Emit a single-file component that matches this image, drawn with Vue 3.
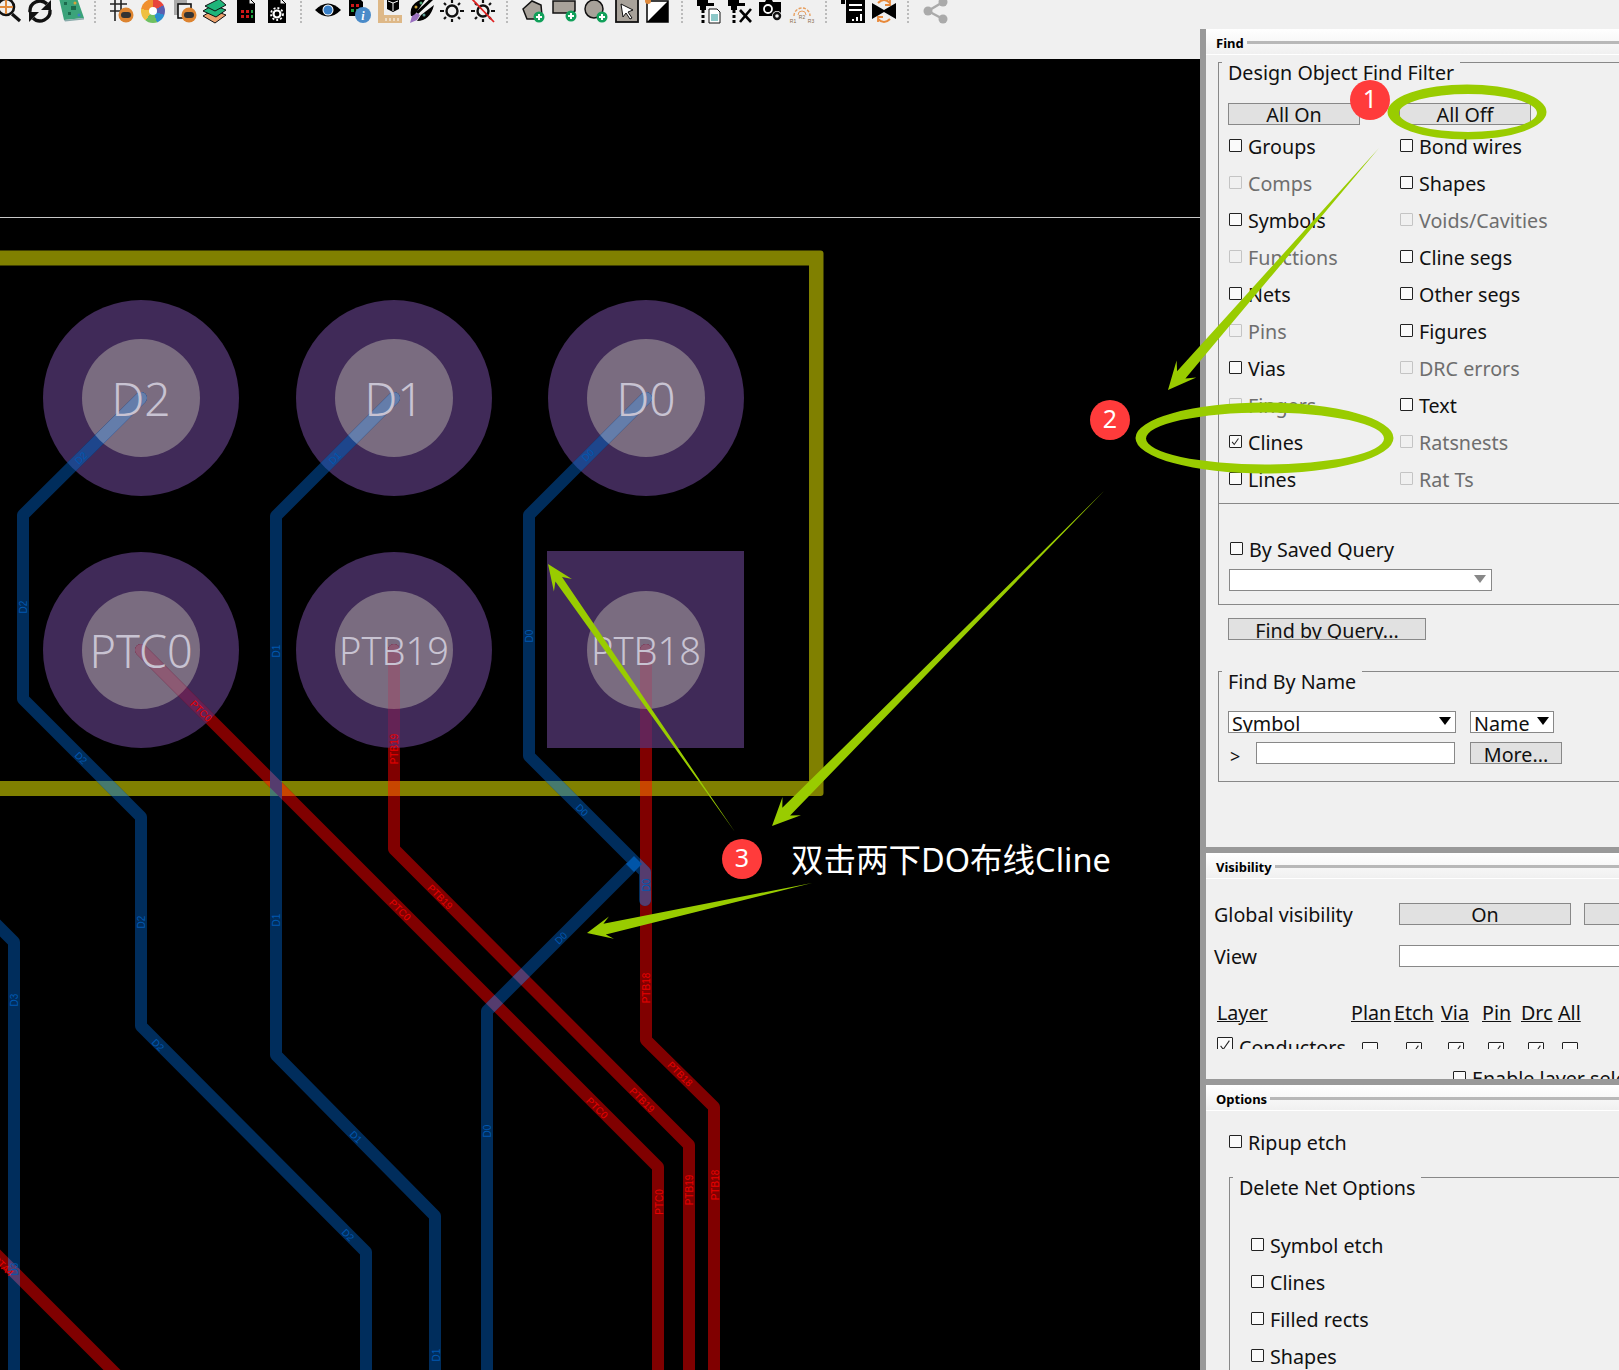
<script setup>
// pcb traces, in page coordinates
const blueTraces = [
  'M141 398 L23 515 V699 L141 817 V1026 L366 1252 V1380',
  'M394 398 L276 516 V1055 L435 1216 V1380',
  'M646 398 L529 515 V756 L645 872 V900',
  'M634 864 L487 1011 V1380',
  'M-20 908 L14 942 V1380'
]
const redTraces = [
  'M141 650 L658 1167 V1380',
  'M394 650 V849 L689 1145 V1380',
  'M646 650 V1040 L714 1107 V1380',
  'M-10 1248 L130 1388'
]
const pads = [
  { name: 'D2', x: 141, y: 398, size: 46 },
  { name: 'D1', x: 394, y: 398, size: 46 },
  { name: 'D0', x: 646, y: 398, size: 46 },
  { name: 'PTC0', x: 141, y: 650, size: 45 },
  { name: 'PTB19', x: 394, y: 650, size: 38 },
  { name: 'PTB18', x: 646, y: 650, size: 38, square: true }
]
const roundPads = pads.filter((p) => !p.square)

// overlap colours: traces are redrawn through a mask where they cross something
const overlaps = [
  { mask: 'url(#m-band)', blue: '#467a6e', red: '#c84600' },
  { mask: 'url(#m-outer)', blue: '#1e468c', red: '#642355' },
  { mask: 'url(#m-inner)', blue: '#647daa', red: '#8c5a73' }
]

const blueLabels = [
  ['D2', 81, 458, -45], ['D1', 335, 458, -45], ['D0', 588, 455, -45],
  ['D2', 23, 607, -90], ['D1', 276, 651, -90], ['D0', 529, 636, -90],
  ['D2', 81, 758, 45], ['D0', 582, 810, 45], ['D0', 646, 885, -90],
  ['D0', 561, 938, -45], ['D2', 141, 922, -90], ['D1', 276, 920, -90],
  ['D3', 14, 1000, -90], ['D2', 158, 1045, 45], ['D1', 356, 1137, 45],
  ['D0', 487, 1131, -90], ['D2', 348, 1235, 45], ['D1', 436, 1355, -90],
  ['D3', 14, 1269, -90]
]
const redLabels = [
  ['PTC0', 201, 711, 45], ['PTB19', 394, 749, -90], ['PTB19', 440, 897, 45],
  ['PTC0', 400, 910, 45], ['PTB18', 646, 988, -90], ['PTB18', 680, 1074, 45],
  ['PTB19', 642, 1100, 45], ['PTC0', 597, 1108, 45], ['PTC0', 659, 1202, -90],
  ['PTB19', 689, 1190, -90], ['PTB18', 715, 1185, -90], ['PTA4', 3, 1266, 45]
]

function arrow(x0, y0, x1, y1, shaft, headW, headL) {
  const len = Math.hypot(x1 - x0, y1 - y0)
  const ux = (x1 - x0) / len
  const uy = (y1 - y0) / len
  const nx = -uy
  const ny = ux
  const nk = headL * 0.72
  const pts = [
    [x0, y0],
    [x1 - ux * nk + nx * shaft / 2, y1 - uy * nk + ny * shaft / 2],
    [x1 - ux * headL + nx * headW / 2, y1 - uy * headL + ny * headW / 2],
    [x1, y1],
    [x1 - ux * headL - nx * headW / 2, y1 - uy * headL - ny * headW / 2],
    [x1 - ux * nk - nx * shaft / 2, y1 - uy * nk - ny * shaft / 2]
  ]
  return pts.map((p) => p.map((v) => v.toFixed(1)).join(',')).join(' ')
}
const arrows = [
  arrow(1379, 148, 1168, 390, 11, 26, 28),
  arrow(1104, 491, 772, 826, 11, 26, 28),
  arrow(735, 832, 548, 564, 8, 22, 26),
  arrow(812, 883, 587, 933, 11, 23, 25)
]

function ell(cx, cy, rx, ry) {
  return `M${cx - rx} ${cy}a${rx} ${ry} 0 1 0 ${rx * 2} 0a${rx} ${ry} 0 1 0 ${-rx * 2} 0Z`
}
const rings = [
  ell(1467, 112, 79.5, 27.5) + ell(1468, 113, 69, 19),
  ell(1264.5, 438, 129, 35.5) + ell(1265, 438.5, 119, 26)
]
const badges = [
  { n: 1, x: 1370, y: 100 },
  { n: 2, x: 1110, y: 420 },
  { n: 3, x: 742, y: 859 }
]

const filters = [
  { label: 'Groups' }, { label: 'Bond wires' },
  { label: 'Comps', off: true }, { label: 'Shapes' },
  { label: 'Symbols' }, { label: 'Voids/Cavities', off: true },
  { label: 'Functions', off: true }, { label: 'Cline segs' },
  { label: 'Nets' }, { label: 'Other segs' },
  { label: 'Pins', off: true }, { label: 'Figures' },
  { label: 'Vias' }, { label: 'DRC errors', off: true },
  { label: 'Fingers', off: true }, { label: 'Text' },
  { label: 'Clines', on: true }, { label: 'Ratsnests', off: true },
  { label: 'Lines' }, { label: 'Rat Ts', off: true }
]
const layerHeads = [
  { t: 'Layer', w: 134 }, { t: 'Plan', w: 43 }, { t: 'Etch', w: 47 },
  { t: 'Via', w: 41 }, { t: 'Pin', w: 39 }, { t: 'Drc', w: 37 }, { t: 'All', w: 30 }
]
const layerBoxes = [
  { w: 44, on: false }, { w: 42, on: true }, { w: 40, on: true },
  { w: 40, on: true }, { w: 34, on: true }, { w: 30, on: false }
]
const netOptions = ['Symbol etch', 'Clines', 'Filled rects', 'Shapes']
</script>

<template>
  <div class="app">
    <div class="left">
      <!-- toolbar -->
      <div class="toolbar">
        <svg class="ic" viewBox="0 0 24 24"><circle cx="9" cy="7" r="8" fill="none" stroke="#111" stroke-width="2.600"/><path d="M2 7h14M9 0v14" stroke="#e08a3c" stroke-width="2"/><path d="M15 14l8 7" stroke="#111" stroke-width="3.200"/></svg>
        <svg class="ic" viewBox="0 0 24 24"><path d="M2 12a10 10 0 0 1 17-8" fill="none" stroke="#111" stroke-width="3.400"/><path d="M23 0v10h-10z" fill="#111"/><path d="M22 10a10 10 0 0 1-17 8" fill="none" stroke="#111" stroke-width="3.400"/><path d="M1 22v-10h10z" fill="#111"/></svg>
        <svg class="ic" viewBox="0 0 24 24"><path d="M0-2h18l7 20-20 2z" fill="#3ba37a"/><path d="M5 20l20-2v1.500l-19 2z" fill="#8aa"/><path d="M5 2h3v3H5zM12 6h5v4h-5zM9 12h3v3H9z" fill="#1b6b4d"/><circle cx="16" cy="3" r="1.500" fill="#d9a23a"/><circle cx="20" cy="15" r="1.500" fill="#3a80c8"/></svg>
        <span class="sep"></span>
        <svg class="ic" viewBox="0 0 24 24"><path d="M5 0v21M11 0v14M0 4h17M0 11h14" stroke="#222" stroke-width="1.600"/><circle cx="16" cy="15" r="7.500" fill="#dd8430"/><rect x="11" y="12" width="10" height="6" rx="3" fill="#333"/></svg>
        <div class="ic wheel"></div>
        <svg class="ic" viewBox="0 0 24 24"><rect x="2" y="-2" width="13" height="17" fill="#aaa"/><rect x="6" y="4" width="13" height="14" fill="#f0f0f0" stroke="#111" stroke-width="1.600"/><circle cx="17" cy="15" r="7.500" fill="#dd8430"/><rect x="12" y="12" width="10" height="6" rx="3" fill="#333"/></svg>
        <svg class="ic" viewBox="0 0 24 24"><path d="M0 16l10-6 13 5-11 8z" fill="#eda26d" stroke="#111"/><path d="M0 11l10-6 13 5-10 7z" fill="#1fb57a" stroke="#111"/><path d="M2 6l14-7 7 6-11 6z" fill="#1fb57a" stroke="#111"/></svg>
        <svg class="ic" viewBox="0 0 24 24"><path d="M3-2h12l6 6v19H3z" fill="#000"/><path d="M15-2l6 6h-6z" fill="#f0f0f0" stroke="#000"/><path d="M7 10h3v3H7zM12 10h3v3h-3zM7 15h3v3H7zM12 15h3v3h-3z" fill="#d01818"/><path d="M17 10h2v3h-2zM17 15h2v3h-2z" fill="#20a040"/></svg>
        <svg class="ic" viewBox="0 0 24 24"><path d="M3-2h12l6 6v19H3z" fill="#000"/><path d="M15-2l6 6h-6z" fill="#f0f0f0" stroke="#000"/><circle cx="12" cy="14" r="3.500" fill="none" stroke="#fff" stroke-width="2.200"/><circle cx="12" cy="14" r="6" fill="none" stroke="#fff" stroke-width="1.800" stroke-dasharray="2 2"/></svg>
        <span class="sep"></span>
        <svg class="ic" viewBox="0 0 24 24"><path d="M-1 10q13-13 26 0q-13 13-26 0z" fill="#000"/><circle cx="12" cy="10" r="5.500" fill="#fff"/><circle cx="12" cy="10" r="4.500" fill="#3a80c8"/></svg>
        <svg class="ic" viewBox="0 0 24 24"><path d="M2-2h10l4 4v14H2z" fill="#000"/><path d="M4 4h3v3H4zM9 4h3v3H9z" fill="#d01818"/><path d="M4 9h3v3H4zM9 9h3v3H9z" fill="#20a040"/><circle cx="16" cy="15" r="8" fill="#4a8bc9"/><text x="16" y="20" class="ic-i">i</text></svg>
        <svg class="ic" viewBox="0 0 24 24"><path d="M0-2h6v17h18v8H0z" fill="#deb887"/><path d="M9-1l6-2 6 2v10l-6 3-6-3z" fill="#000"/><path d="M10 1l5 2 5-2M15 3v8" stroke="#fff" fill="none"/><path d="M8 18v3M12 18v3M16 18v3M20 18v3" stroke="#fff"/></svg>
        <svg class="ic" viewBox="0 0 24 24"><path d="M2 16Q0 6 9 1q3-2 7-1L5 16zM8 21Q21 21 25 5L12 15z" fill="#000"/><path d="M23-1L8 13" stroke="#000" stroke-width="3"/><path d="M8 13l-5 3-2 7 7-3 3-5z" fill="#9a70c0"/><circle cx="7" cy="7" r="1.500" fill="#c9a23a"/><circle cx="12" cy="3" r="1.500" fill="#4aa070"/><circle cx="15" cy="15" r="1.500" fill="#5a9a90"/></svg>
        <svg class="ic" viewBox="0 0 24 24"><circle cx="12" cy="11" r="5.500" fill="none" stroke="#111" stroke-width="2.400"/><path d="M12 0v3M12 19v3M0 11h4M20 11h4M4 3l2 2M18 17l2 2M20 3l-2 2M4 19l2-2" stroke="#111" stroke-width="2.200"/></svg>
        <svg class="ic" viewBox="0 0 24 24"><circle cx="12" cy="11" r="5.500" fill="none" stroke="#111" stroke-width="2.400"/><path d="M12 0v3M12 19v3M0 11h4M20 11h4M4 3l2 2M18 17l2 2M20 3l-2 2M4 19l2-2" stroke="#111" stroke-width="2.200"/><path d="M1-1l22 23" stroke="#e02020" stroke-width="1.800"/></svg>
        <span class="sep"></span>
        <svg class="ic" viewBox="0 0 24 24"><path d="M1 9l9-8 9 4 1 11-6 3H5z" fill="#a8a29a" stroke="#111" stroke-width="1.500"/><circle cx="17" cy="17" r="5.500" fill="#11a05a"/><path d="M17 14v6M14 17h6" stroke="#fff" stroke-width="2"/></svg>
        <svg class="ic" viewBox="0 0 24 24"><path d="M0 1h22v10l-4 2H0z" fill="#a8a29a" stroke="#111" stroke-width="1.500"/><circle cx="18" cy="16" r="5.500" fill="#11a05a"/><path d="M18 13v6M15 16h6" stroke="#fff" stroke-width="2"/></svg>
        <svg class="ic" viewBox="0 0 24 24"><circle cx="10" cy="9" r="9" fill="#a8a29a" stroke="#111" stroke-width="1.500"/><circle cx="18" cy="17" r="5.500" fill="#11a05a"/><path d="M18 14v6M15 17h6" stroke="#fff" stroke-width="2"/></svg>
        <svg class="ic" viewBox="0 0 24 24"><rect x="1" y="-2" width="22" height="24" fill="#a8a29a" stroke="#111" stroke-width="1.800"/><path d="M6 4l12 6-5 2 4 6-2 1-4-6-3 4z" fill="#fff" stroke="#111"/></svg>
        <svg class="ic" viewBox="0 0 24 24"><rect x="1" y="1" width="21" height="21" fill="#fff" stroke="#111" stroke-width="1.600"/><path d="M22 1v21H1z" fill="#000"/><circle cx="2" cy="1" r="3" fill="#e08a3c"/></svg>
        <span class="sep"></span>
        <svg class="ic" viewBox="0 0 24 24"><path d="M0 0h11v3h6v3h-8v4H3V6H0z" fill="#000"/><path d="M6 10v13" stroke="#000" stroke-width="3" stroke-dasharray="3 2"/><path d="M12 9h8l3 3v11H12z" fill="#fff" stroke="#111"/><path d="M14 14h7v7h-7z" fill="#8cc8c8"/></svg>
        <svg class="ic" viewBox="0 0 24 24"><path d="M0 0h11v3h6v3h-8v4H3V6H0z" fill="#000"/><path d="M6 10v13" stroke="#000" stroke-width="3" stroke-dasharray="3 2"/><path d="M12 10l11 12M23 9L12 22" stroke="#000" stroke-width="2.600"/></svg>
        <svg class="ic" viewBox="0 0 24 24"><path d="M0 2h6l1-2h6l1 2h8v14H0z" fill="#000"/><circle cx="9" cy="9" r="4" fill="none" stroke="#fff" stroke-width="1.800"/><circle cx="18" cy="16" r="5" fill="#f0f0f0"/><circle cx="18" cy="16" r="3" fill="none" stroke="#111" stroke-width="2.400"/></svg>
        <svg class="ic" viewBox="0 0 24 24"><path d="M4 16a8 8 0 1 1 16 0" fill="none" stroke="#e8a060" stroke-width="1.400" stroke-dasharray="3 1.500"/><path d="M8 15a4 4 0 1 1 8 0" fill="none" stroke="#e8a060"/><text x="3" y="23" class="ic-r">R1</text><text x="12" y="19" class="ic-r">R2</text><text x="21" y="23" class="ic-r">R3</text></svg>
        <span class="sep"></span>
        <svg class="ic" viewBox="0 0 24 24"><path d="M0 0h4v4h-4z" fill="#000"/><path d="M5-2h19v25H5z" fill="#000"/><path d="M8 4h13v2H8zM8 9h13v2H8z" fill="#fff"/><path d="M11 19h2v2h-2zM15 17h2v4h-2zM19 14h2v7h-2z" fill="#fff"/></svg>
        <svg class="ic" viewBox="0 0 24 24"><path d="M0 3l12 7 12-7v16l-12-7-12 7z" fill="#000"/><path d="M6 3q6-6 12 0M18 19q-6 6-12 0" fill="none" stroke="#e8893a" stroke-width="2"/><path d="M18 0v5h-5M6 22v-5h5" fill="none" stroke="#e8893a" stroke-width="1.800"/></svg>
        <span class="sep"></span>
        <svg class="ic" viewBox="0 0 24 24"><path d="M20 2L5 11l15 8" fill="none" stroke="#aaa" stroke-width="2.400"/><circle cx="20" cy="2" r="4.500" fill="#aaa"/><circle cx="5" cy="11" r="4.500" fill="#aaa"/><circle cx="20" cy="19" r="4.500" fill="#aaa"/></svg>
      </div>

      <!-- board -->
      <svg class="board" viewBox="0 59 1200 1311">
        <defs>
          <mask id="m-band" maskUnits="userSpaceOnUse" x="0" y="59" width="1200" height="1311">
            <path d="M0 258H816V788.500H0" fill="none" stroke="#fff" stroke-width="15"/>
          </mask>
          <mask id="m-outer" maskUnits="userSpaceOnUse" x="0" y="59" width="1200" height="1311">
            <circle v-for="p in roundPads" :key="p.name" :cx="p.x" :cy="p.y" r="98" fill="#fff"/>
            <rect x="547" y="551" width="197" height="197" fill="#fff"/>
          </mask>
          <mask id="m-inner" maskUnits="userSpaceOnUse" x="0" y="59" width="1200" height="1311">
            <circle v-for="p in pads" :key="p.name" :cx="p.x" :cy="p.y" r="59" fill="#fff"/>
          </mask>
          <mask id="m-red" maskUnits="userSpaceOnUse" x="0" y="59" width="1200" height="1311">
            <path v-for="d in redTraces" :key="d" :d="d" class="trace" stroke="#fff"/>
          </mask>
        </defs>

        <line x1="0" y1="217.500" x2="1200" y2="217.500" stroke="#c8c8c8"/>
        <path d="M-10 250.500H820.500a3 3 0 0 1 3 3V793a3 3 0 0 1-3 3H-10ZM-10 265.500V781H809V265.500Z" fill="#808000" fill-rule="evenodd"/>

        <template v-for="p in pads" :key="p.name">
          <rect v-if="p.square" x="547" y="551" width="197" height="197" fill="#402a58"/>
          <circle v-else :cx="p.x" :cy="p.y" r="98" fill="#402a58"/>
          <circle :cx="p.x" :cy="p.y" r="59" fill="#7a6c80"/>
        </template>

        <path v-for="d in redTraces" :key="d" :d="d" class="trace" stroke="#800000"/>
        <path v-for="d in blueTraces" :key="d" :d="d" class="trace" stroke="#002d5c"/>

        <g v-for="o in overlaps" :key="o.mask" :mask="o.mask">
          <path v-for="d in redTraces" :key="d" :d="d" class="trace" :stroke="o.red"/>
          <path v-for="d in blueTraces" :key="d" :d="d" class="trace" :stroke="o.blue"/>
        </g>
        <g mask="url(#m-red)">
          <path v-for="d in blueTraces" :key="d" :d="d" class="trace" stroke="#553c6e"/>
        </g>
        <path d="M634 856l8 8-8 8-8-8z" fill="#0055a8"/>

        <text v-for="(l, i) in blueLabels" :key="'b' + i" class="net blue" :x="l[1]" :y="l[2]" :transform="`rotate(${l[3]} ${l[1]} ${l[2]})`">{{ l[0] }}</text>
        <text v-for="(l, i) in redLabels" :key="'r' + i" class="net red" :x="l[1]" :y="l[2]" :transform="`rotate(${l[3]} ${l[1]} ${l[2]})`">{{ l[0] }}</text>

        <text v-for="p in pads" :key="p.name" class="pad-name" :x="p.x" :y="p.y" :font-size="p.size">{{ p.name }}</text>
      </svg>
    </div>

    <!-- right side panels -->
    <div class="side">
      <div class="panels">
        <section class="panel find">
          <header class="head"><b>Find</b><i></i></header>
          <div class="group filter">
            <span class="title">Design Object Find Filter</span>
            <div class="two-btn">
              <div class="btn w132">All On</div>
              <div class="btn w132">All Off</div>
            </div>
            <div class="grid">
              <label v-for="f in filters" :key="f.label" class="check" :class="{ off: f.off }">
                <span class="box">
                  <svg v-if="f.on" viewBox="0 0 13 13"><path d="M2.500 7l2.500 3 5-7" fill="none" stroke="#222" stroke-width="1.200"/></svg>
                </span>
                {{ f.label }}
              </label>
            </div>
          </div>
          <div class="group query">
            <label class="check"><span class="box"></span>By Saved Query</label>
            <div class="select q-sel"><span></span><em class="tri grey"></em></div>
          </div>
          <div class="btn find-q">Find by Query...</div>
          <div class="group byname">
            <span class="title">Find By Name</span>
            <div class="name-row first">
              <div class="select sym">Symbol<em class="tri"></em></div>
              <div class="select nm">Name<em class="tri"></em></div>
            </div>
            <div class="name-row">
              <span class="gt">&gt;</span>
              <div class="input nm-in"></div>
              <div class="btn more">More...</div>
            </div>
          </div>
        </section>

        <section class="panel vis">
          <header class="head"><b>Visibility</b><i></i></header>
          <div class="vis-row global">
            <span class="lab">Global visibility</span>
            <div class="btn on">On</div>
            <div class="btn off2"></div>
          </div>
          <div class="vis-row view">
            <span class="lab">View</span>
            <div class="input wide"></div>
          </div>
          <div class="layer-head">
            <u v-for="h in layerHeads" :key="h.t" :style="{ width: h.w + 'px' }">{{ h.t }}</u>
          </div>
          <div class="layer-row">
            <span class="cond"><span class="box big"><svg viewBox="0 0 16 16"><path d="M3 9l3 4 7-10" fill="none" stroke="#222" stroke-width="1.200"/></svg></span>Conductors</span>
            <span v-for="(b, i) in layerBoxes" :key="i" class="cell" :style="{ width: b.w + 'px' }">
              <span class="box big"><svg v-if="b.on" viewBox="0 0 16 16"><path d="M3 9l3 4 7-10" fill="none" stroke="#222" stroke-width="1.200"/></svg></span>
            </span>
          </div>
          <label class="check enable"><span class="box"></span>Enable layer selection mode</label>
        </section>

        <section class="panel opts">
          <header class="head"><b>Options</b><i></i></header>
          <label class="check ripup"><span class="box"></span>Ripup etch</label>
          <div class="group delnet">
            <span class="title">Delete Net Options</span>
            <label v-for="n in netOptions" :key="n" class="check"><span class="box"></span>{{ n }}</label>
          </div>
        </section>
      </div>
    </div>

    <!-- annotations drawn over the screenshot -->
    <svg class="notes" viewBox="0 0 1619 1370">
      <path v-for="(r, i) in rings" :key="i" :d="r" fill="#99cc00" fill-rule="evenodd"/>
      <polygon v-for="(a, i) in arrows" :key="'a' + i" :points="a" fill="#99cc00"/>
      <template v-for="b in badges" :key="b.n">
        <circle :cx="b.x" :cy="b.y" r="20" fill="#ff3b3b"/>
        <text class="badge" :x="b.x" :y="b.y - 2">{{ b.n }}</text>
      </template>
      <text class="cap" x="791" y="859">双击两下DO布线Cline</text>
    </svg>
  </div>
</template>

<style scoped>
.app {
  position: relative;
  display: flex;
  width: 1619px;
  height: 1370px;
  overflow: hidden;
  background: #f0f0f0;
  font-family: "Noto Sans", "Open Sans", sans-serif;
  font-size: 19.700px;
  color: #111;
}

.left {
  width: 1200px;
  flex: none;
  display: flex;
  flex-direction: column;
}

.toolbar {
  height: 59px;
  flex: none;
  display: flex;
  align-items: flex-start;
  margin-left: -3px;
  overflow: hidden;
}

.ic {
  width: 24px;
  height: 24px;
  flex: none;
  margin-right: 7px;
  overflow: visible;
}

.wheel {
  position: relative;
  margin-top: -1px;
  border-radius: 50%;
  background: conic-gradient(#e8453c 0 60deg, #5a5fb0 60deg 110deg, #2c8fd0 110deg 160deg, #6fc060 160deg 220deg, #f0c040 220deg 280deg, #f09030 280deg 360deg);
}

.wheel::after {
  content: "";
  position: absolute;
  left: 8px;
  top: 8px;
  width: 8px;
  height: 8px;
  border-radius: 50%;
  background: #fff;
}

.ic-i {
  font: italic bold 12px "Liberation Serif", serif;
  fill: #fff;
  text-anchor: middle;
}

.ic-r {
  font: 5px "Liberation Sans", sans-serif;
  fill: #8a6a4a;
  text-anchor: middle;
}

.sep {
  width: 2px;
  height: 23px;
  flex: none;
  margin: 1px 14px 0 4px;
  background: repeating-linear-gradient(#bbb 0 2px, transparent 2px 4px);
}

.board {
  display: block;
  width: 1200px;
  height: 1311px;
  background: #000;
}

.trace {
  fill: none;
  stroke-width: 12;
  stroke-linejoin: round;
  stroke-linecap: round;
}

.net {
  font: 10px "Liberation Sans", sans-serif;
  text-anchor: middle;
  dominant-baseline: central;
}

.blue {
  fill: #0058b0;
}

.red {
  fill: #e80000;
}

.pad-name {
  font-family: "Noto Sans", sans-serif;
  font-weight: 300;
  fill: #c8c3d2;
  text-anchor: middle;
  dominant-baseline: central;
}

.side {
  flex: 1;
  padding-top: 29px;
  min-width: 0;
}

.panels {
  height: 1341px;
  border-left: 6px solid #999;
}

.panel {
  overflow: hidden;
  box-sizing: border-box;
}

.find {
  height: 818px;
}

.vis {
  height: 232px;
  border-top: 6px solid #999;
}

.opts {
  height: 291px;
  border-top: 6px solid #999;
}

.head {
  height: 26px;
  display: flex;
  align-items: center;
  gap: 3px;
  padding: 2px 0 0 10px;
  background: linear-gradient(#fff, #f0f0f0);
  border-bottom: 1px solid #fff;
  box-sizing: border-box;
  font-size: 13px;
  color: #000;
}

.head i {
  flex: 1;
  height: 3px;
  background: #b8b8b8;
}

.group {
  width: 520px;
  box-sizing: border-box;
  border: 1px solid #888;
  margin-left: 12px;
}

.title {
  display: inline-block;
  height: 24px;
  margin: -1px 0 0 3px;
  padding: 0 6px;
  line-height: 22px;
  background: #f0f0f0;
  vertical-align: top;
}

.btn,
.select,
.input {
  box-sizing: border-box;
  height: 22px;
  flex: none;
  border: 1px solid #888;
  line-height: 22px;
  overflow: hidden;
}

.btn {
  background: #e1e1e1;
  text-align: center;
}

.select,
.input {
  background: #fff;
}

.filter {
  margin-top: 7px;
  height: 441px;
  border-bottom: 0;
}

.two-btn {
  display: flex;
  gap: 39px;
  margin: 13px 0 0 9px;
}

.w132 {
  width: 132px;
}

.grid {
  display: grid;
  grid-template-columns: 171px 171px;
  row-gap: 15px;
  margin: 11px 0 0 10px;
}

.check {
  display: flex;
  align-items: center;
  gap: 6px;
  height: 22px;
  line-height: 24px;
  white-space: nowrap;
}

.check.off {
  color: #6e6e6e;
}

.box {
  flex: none;
  width: 13px;
  height: 13px;
  box-sizing: border-box;
  border: 1.500px solid #222;
  border-radius: 1px;
  background: #fafafa;
  margin-top: -3px;
}

.box svg {
  display: block;
  width: 100%;
  height: 100%;
}

.off .box {
  border-color: #c4c4c4;
  background: #f0f0f0;
}

.query {
  height: 102px;
  padding: 35px 0 0 11px;
}

.q-sel {
  position: relative;
  width: 263px;
  margin: 8px 0 0 -1px;
}

.tri {
  position: absolute;
  right: 4px;
  top: 5px;
  border-left: 6px solid transparent;
  border-right: 6px solid transparent;
  border-top: 8px solid #000;
}

.tri.grey {
  right: 5px;
  border-top-color: #888;
}

.find-q {
  width: 198px;
  margin: 13px 0 0 22px;
  line-height: 24px;
}

.byname {
  height: 111px;
  margin-top: 31px;
}

.name-row {
  display: flex;
  align-items: flex-start;
  margin: 9px 0 0 9px;
}

.name-row.first {
  margin-top: 12px;
}

.sym,
.nm {
  position: relative;
  padding-left: 3px;
  line-height: 23px;
}

.sym {
  width: 228px;
  margin-right: 14px;
}

.nm {
  width: 84px;
}

.gt {
  width: 28px;
  padding-left: 2px;
  box-sizing: border-box;
  line-height: 28px;
  font-size: 18px;
}

.nm-in {
  width: 199px;
  margin-right: 15px;
}

.more {
  width: 92px;
  line-height: 24px;
}

.vis-row {
  display: flex;
  padding-left: 8px;
}

.lab {
  width: 185px;
  flex: none;
  line-height: 24px;
}

.global {
  margin-top: 24px;
}

.on {
  width: 172px;
  margin-right: 13px;
}

.off2 {
  width: 100px;
}

.view {
  margin-top: 18px;
}

.wide {
  width: 300px;
}

.layer-head {
  display: flex;
  margin: 33px 0 0 11px;
  line-height: 22px;
}

.layer-row {
  display: flex;
  height: 12px;
  overflow: hidden;
  margin: 13px 0 0 11px;
}

.cond {
  width: 145px;
  flex: none;
  display: flex;
  gap: 6px;
  line-height: 22px;
}

.cell {
  flex: none;
}

.box.big {
  display: inline-block;
  width: 16px;
  height: 16px;
  margin: 0;
}

.enable {
  margin: 19px 0 0 247px;
}

.ripup {
  margin: 21px 0 0 23px;
}

.delnet {
  height: 300px;
  margin: 23px 0 0 23px;
}

.delnet .check {
  margin: 0 0 15px 21px;
}

.delnet .title {
  display: block;
  width: max-content;
  margin-bottom: 34px;
}

.notes {
  position: absolute;
  left: 0;
  top: 0;
  width: 1619px;
  height: 1370px;
  pointer-events: none;
}

.badge {
  font-family: "Noto Sans", sans-serif;
  font-size: 25px;
  fill: #fff;
  text-anchor: middle;
  dominant-baseline: central;
}

.cap {
  font-family: "Noto Sans", "Noto Sans CJK SC", sans-serif;
  font-size: 32.500px;
  fill: #fff;
  dominant-baseline: central;
}
</style>
